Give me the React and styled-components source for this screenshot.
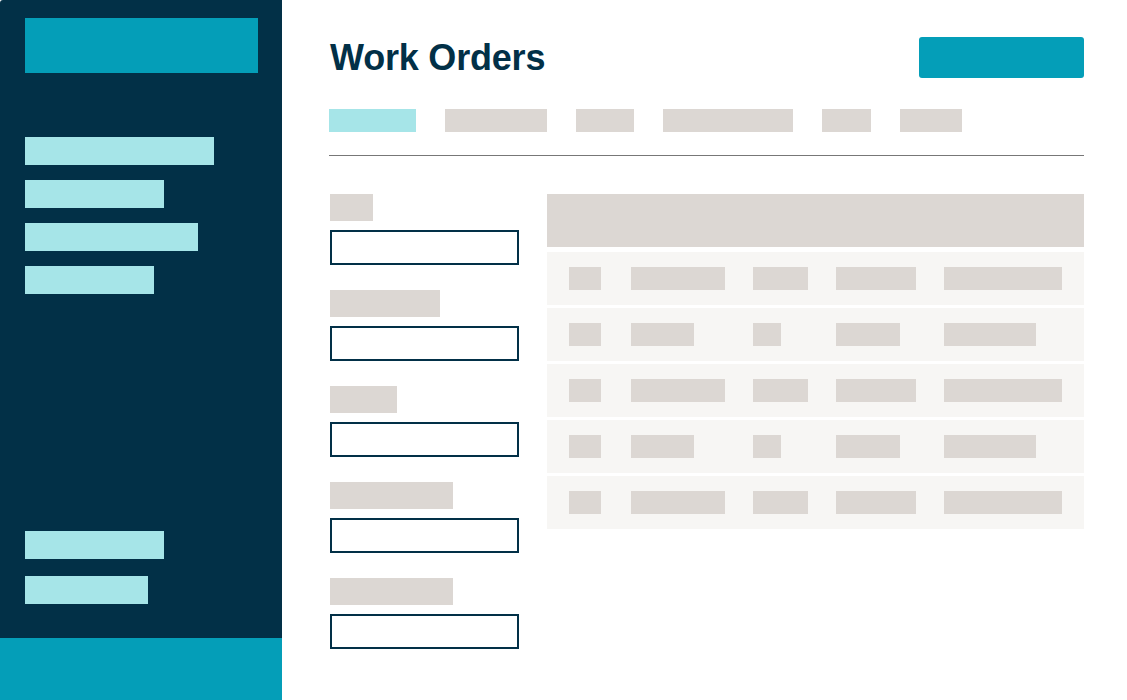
import React from 'react'
import styled, { createGlobalStyle } from 'styled-components'

const GlobalStyle = createGlobalStyle`
  html, body {
    margin: 0;
    padding: 0;
    background: #ffffff;
    font-family: "Liberation Sans", Arial, sans-serif;
  }
`

const navy = '#023047'
const teal = '#049eb8'
const aqua = '#a6e5e8'
const stone = '#dcd7d3'
const mist = '#f7f6f4'

const Page = styled.div`
  display: flex;
  width: 1127px;
  height: 700px;
  overflow: hidden;
`

const Sidebar = styled.aside`
  width: 282px;
  flex-shrink: 0;
  background: ${navy};
  display: flex;
  flex-direction: column;
  border-top-left-radius: 3px;
`

const Logo = styled.div`
  margin: 18px 0 0 25px;
  width: 233px;
  height: 55px;
  background: ${teal};
`

const NavList = styled.nav`
  display: flex;
  flex-direction: column;
  gap: ${p => p.$gap}px;
  padding-left: 25px;
  margin-top: ${p => p.$top}px;
`

const NavItem = styled.div`
  width: ${p => p.$w}px;
  height: 28px;
  background: ${aqua};
`

const Spacer = styled.div`
  flex: 1;
`

const SideFooter = styled.div`
  height: 62px;
  margin-top: 34px;
  background: ${teal};
`

const Main = styled.main`
  flex: 1;
  padding: 37px 43px 0 48px;
  display: flex;
  flex-direction: column;
`

const Header = styled.header`
  display: flex;
  align-items: center;
  justify-content: space-between;
`

const Title = styled.h1`
  margin: 0;
  font-size: 36px;
  line-height: 36px;
  font-weight: 700;
  color: ${navy};
  letter-spacing: -0.2px;
`

const Button = styled.button`
  width: 165px;
  height: 41px;
  border: none;
  border-radius: 3px;
  background: ${teal};
  cursor: pointer;
`

const Tabs = styled.div`
  display: flex;
  gap: 29px;
  margin: 31px 0 0 -1px;
  padding-bottom: 23px;
  border-bottom: 1px solid #777777;
`

const Tab = styled.div`
  width: ${p => p.$w}px;
  height: 23px;
  background: ${p => (p.$active ? aqua : stone)};
`

const Content = styled.div`
  display: flex;
  gap: 28px;
  margin-top: 38px;
`

const Filters = styled.div`
  width: 189px;
  display: flex;
  flex-direction: column;
  gap: 25px;
`

const Field = styled.div`
  display: flex;
  flex-direction: column;
  gap: 9px;
`

const Label = styled.div`
  width: ${p => p.$w}px;
  height: 27px;
  background: ${stone};
`

const Input = styled.div`
  height: 35px;
  box-sizing: border-box;
  border: 2px solid ${navy};
  background: #ffffff;
`

const Table = styled.div`
  flex: 1;
  display: flex;
  flex-direction: column;
  gap: 3px;
`

const TableHead = styled.div`
  height: 53px;
  background: ${stone};
  margin-bottom: 2px;
`

const Row = styled.div`
  height: 53px;
  box-sizing: border-box;
  padding: 15px 0 0 22px;
  background: ${mist};
  display: grid;
  grid-template-columns: 62px 122px 83px 108px 1fr;
  align-items: start;
`

const Cell = styled.div`
  width: ${p => p.$w}px;
  height: 23px;
  background: ${stone};
`

const longRow = [32, 94, 55, 80, 118]
const shortRow = [32, 63, 28, 64, 92]
const rows = [longRow, shortRow, longRow, shortRow, longRow]

const tabs = [87, 102, 58, 130, 49, 62]
const labels = [43, 110, 67, 123, 123]

export default function App() {
  return (
    <>
      <GlobalStyle />
      <Page>
        <Sidebar>
          <Logo />
          <NavList $top={64} $gap={15}>
            {[189, 139, 173, 129].map((w, i) => (
              <NavItem key={i} $w={w} />
            ))}
          </NavList>
          <Spacer />
          <NavList $top={0} $gap={17}>
            <NavItem $w={139} />
            <NavItem $w={123} />
          </NavList>
          <SideFooter />
        </Sidebar>
        <Main>
          <Header>
            <Title>Work Orders</Title>
            <Button aria-label="New work order" />
          </Header>
          <Tabs>
            {tabs.map((w, i) => (
              <Tab key={i} $w={w} $active={i === 0} />
            ))}
          </Tabs>
          <Content>
            <Filters>
              {labels.map((w, i) => (
                <Field key={i}>
                  <Label $w={w} />
                  <Input />
                </Field>
              ))}
            </Filters>
            <Table>
              <TableHead />
              {rows.map((cells, i) => (
                <Row key={i}>
                  {cells.map((w, j) => (
                    <Cell key={j} $w={w} />
                  ))}
                </Row>
              ))}
            </Table>
          </Content>
        </Main>
      </Page>
    </>
  )
}
